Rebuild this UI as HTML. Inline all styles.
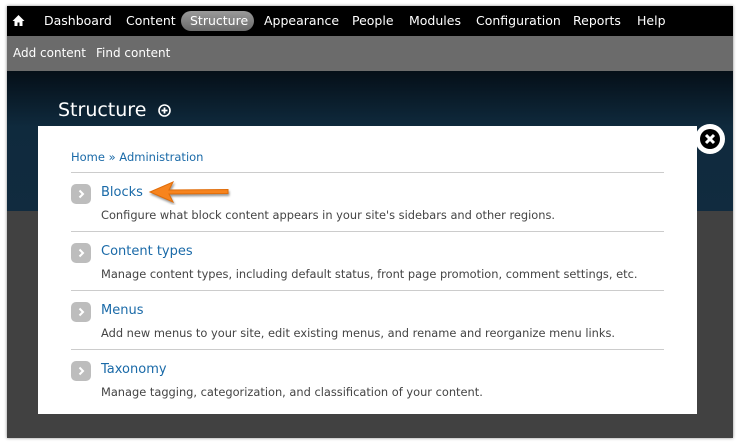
<!DOCTYPE html>
<html><head><style>
*{margin:0;padding:0;box-sizing:border-box}
body{width:739px;height:447px;background:#fff;position:relative;overflow:hidden;font-family:"DejaVu Sans","Liberation Sans",sans-serif}
.frame{position:absolute;left:7px;top:6px;width:726px;height:432px;background:#414141;box-shadow:0 0 3px #888;overflow:hidden}
.top{position:absolute;left:0;top:0;width:100%;height:30px;background:#000;color:#fff;font-size:12.5px}
.top span{position:absolute;top:7px}
.pill{position:absolute;left:174px;top:5px;width:73px;height:20px;border-radius:10px;background:linear-gradient(#9a9a9a,#6a6a6a)}
.sub{position:absolute;left:0;top:30px;width:100%;height:35px;background:#6b6b6b;color:#fff;font-size:12px}
.sub span{position:absolute;top:10px}
.blue{position:absolute;left:0;top:65px;width:100%;height:140px;background:linear-gradient(#050f18,#0f2a3d 40%,#112b3f)}
.h1{position:absolute;left:51px;top:93px;color:#fff;font-size:19px}
.modal{position:absolute;left:38px;top:126px;width:659px;height:288px;background:#fff}
.close{position:absolute;left:695px;top:124px;width:30px;height:30px;border-radius:15px;background:#fff}
.bc{position:absolute;left:33px;top:24px;font-size:11.5px;color:#1a6aa8}
.row{position:absolute;left:33px;width:593px;border-top:1px solid #ccc}
.ic{position:absolute;left:0;top:11px;width:20px;height:20px;border-radius:5px;background:#bdbdbd}
.t{position:absolute;left:30px;top:12px;font-size:13px;color:#1a6aa8}
.d{position:absolute;left:30px;top:35px;font-size:11.4px;color:#444;white-space:nowrap}
</style></head><body>
<div class="frame">
<div class="top">
<svg style="position:absolute;left:5px;top:8px" width="13" height="13" viewBox="0 0 13 13"><path d="M6.5 1L0.5 7H2.5V12H5.5V8.5H7.5V12H10.5V7H12.5Z" fill="#fff"/></svg>
<span style="left:37px">Dashboard</span><span style="left:119px">Content</span>
<div class="pill"></div><span style="left:183px">Structure</span>
<span style="left:257px">Appearance</span><span style="left:345px">People</span><span style="left:402px">Modules</span><span style="left:469px">Configuration</span><span style="left:566px">Reports</span><span style="left:630px">Help</span>
</div>
<div class="sub"><span style="left:6px">Add content</span><span style="left:89px">Find content</span></div>
<div class="blue"></div>
<div class="h1">Structure</div>
<svg style="position:absolute;left:151px;top:98px" width="13" height="13" viewBox="0 0 13 13"><circle cx="6.5" cy="6.5" r="5.5" fill="none" stroke="#fff" stroke-width="1.6"/><path d="M6.5 3.5V9.5M3.5 6.5H9.5" stroke="#fff" stroke-width="1.8"/></svg>
</div>
<div class="modal">
<div class="bc">Home » Administration</div>
<div class="row" style="top:46px"><div class="ic"><svg width="20" height="20"><path d="M8.5 6.5L12 10L8.5 13.5" fill="none" stroke="#fff" stroke-width="2"/></svg></div><div class="t">Blocks</div><div class="d">Configure what block content appears in your site's sidebars and other regions.</div></div>
<div class="row" style="top:105px"><div class="ic"><svg width="20" height="20"><path d="M8.5 6.5L12 10L8.5 13.5" fill="none" stroke="#fff" stroke-width="2"/></svg></div><div class="t">Content types</div><div class="d">Manage content types, including default status, front page promotion, comment settings, etc.</div></div>
<div class="row" style="top:164px"><div class="ic"><svg width="20" height="20"><path d="M8.5 6.5L12 10L8.5 13.5" fill="none" stroke="#fff" stroke-width="2"/></svg></div><div class="t">Menus</div><div class="d">Add new menus to your site, edit existing menus, and rename and reorganize menu links.</div></div>
<div class="row" style="top:223px"><div class="ic"><svg width="20" height="20"><path d="M8.5 6.5L12 10L8.5 13.5" fill="none" stroke="#fff" stroke-width="2"/></svg></div><div class="t">Taxonomy</div><div class="d">Manage tagging, categorization, and classification of your content.</div></div>
<svg style="position:absolute;left:110px;top:53px" width="85" height="26" viewBox="0 0 85 26"><path d="M2 13L25 3L21 11L80 10.5L80 14.5L21 15L25 23Z" fill="#f7841e" stroke="#e06d0a" stroke-width="1" filter="drop-shadow(1px 2px 1px rgba(0,0,0,.4))"/></svg>
</div>
<div class="close"><svg width="30" height="30"><circle cx="15" cy="15" r="10" fill="#000"/><path d="M11 11L19 19M19 11L11 19" stroke="#fff" stroke-width="3"/></svg></div>
</body></html>
